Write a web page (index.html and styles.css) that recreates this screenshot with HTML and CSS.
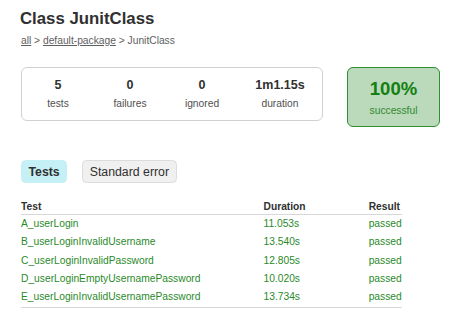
FILE: index.html
```html
<!DOCTYPE html>
<html lang="en">
<head>
    <meta charset="UTF-8">
    <meta name="viewport" content="width=device-width, initial-scale=1.0">
    <title>Test results - Class JunitClass</title>
    <link rel="stylesheet" href="styles.css">
</head>
<body>
    <div id="content">
        <h1>Class JunitClass</h1>
        <div class="breadcrumbs">
            <a href="#">all</a> &gt; <a href="#">default-package</a> &gt; JunitClass
        </div>

        <div id="summary">
            <div class="summaryGroup">
                <div class="infoBox">
                    <div class="counter">5</div>
                    <p>tests</p>
                </div>
                <div class="infoBox">
                    <div class="counter">0</div>
                    <p>failures</p>
                </div>
                <div class="infoBox">
                    <div class="counter">0</div>
                    <p>ignored</p>
                </div>
                <div class="infoBox duration">
                    <div class="counter">1m1.15s</div>
                    <p>duration</p>
                </div>
            </div>
            <div class="infoBox successRate">
                <div class="percent">100%</div>
                <p>successful</p>
            </div>
        </div>

        <ul class="tabLinks">
            <li class="selected"><a href="#tab0">Tests</a></li>
            <li><a href="#tab1">Standard error</a></li>
        </ul>

        <div class="tab">
            <table>
                <thead>
                    <tr>
                        <th>Test</th>
                        <th>Duration</th>
                        <th>Result</th>
                    </tr>
                </thead>
                <tbody>
                    <tr>
                        <td class="success">A_userLogin</td>
                        <td class="success">11.053s</td>
                        <td class="success">passed</td>
                    </tr>
                    <tr>
                        <td class="success">B_userLoginInvalidUsername</td>
                        <td class="success">13.540s</td>
                        <td class="success">passed</td>
                    </tr>
                    <tr>
                        <td class="success">C_userLoginInvalidPassword</td>
                        <td class="success">12.805s</td>
                        <td class="success">passed</td>
                    </tr>
                    <tr>
                        <td class="success">D_userLoginEmptyUsernamePassword</td>
                        <td class="success">10.020s</td>
                        <td class="success">passed</td>
                    </tr>
                    <tr>
                        <td class="success">E_userLoginInvalidUsernamePassword</td>
                        <td class="success">13.734s</td>
                        <td class="success">passed</td>
                    </tr>
                </tbody>
            </table>
        </div>
    </div>
</body>
</html>
```

FILE: styles.css
```css
body {
    margin: 0;
    padding: 0;
    font-family: "Liberation Sans", Arial, sans-serif;
    font-size: 10.25px;
    color: #303030;
    background-color: #fff;
}
a, a:visited {
    color: #303030;
}
#content {
    padding: 9px 20px 20px 21px;
}
#content h1 {
    font-size: 16.8px;
    line-height: 20px;
    margin: 0 0 5.5px -1px;
    white-space: nowrap;
}
.breadcrumbs, .breadcrumbs a {
    color: #606060;
    line-height: 12px;
}
#summary {
    display: flex;
    align-items: flex-start;
    margin-top: 20.5px;
}
.summaryGroup {
    display: flex;
    border: solid 1px #d0d0d0;
    border-radius: 6px;
}
.infoBox {
    width: 72px;
    padding: 10px 0;
    text-align: center;
}
.infoBox.duration {
    width: 84px;
}
.infoBox p {
    margin: 0;
    line-height: 13px;
    color: #505050;
}
.counter {
    font-size: 12.5px;
    font-weight: bold;
    line-height: 15px;
    margin-bottom: 4px;
}
.successRate {
    width: 91px;
    margin-left: 24px;
    padding: 10px 0 9px;
    border: solid 1px #2f8f2f;
    border-radius: 6px;
    background-color: #bbd9bb;
}
.successRate .percent {
    font-size: 18.5px;
    font-weight: bold;
    line-height: 22px;
    margin-bottom: 4px;
    color: #128012;
}
.successRate p {
    color: #2f8a2f;
}
ul.tabLinks {
    display: flex;
    gap: 15px;
    margin: 33px 0 16.7px;
    padding: 0;
    list-style: none;
}
ul.tabLinks li {
    padding: 4px 6.5px 3px;
    border: solid 1px #dcdcdc;
    border-radius: 4.5px;
    background-color: #f0f0f0;
}
ul.tabLinks li.selected {
    background-color: #c5f0f5;
    border-color: #c5f0f5;
}
ul.tabLinks li.selected a {
    font-weight: bold;
}
ul.tabLinks a {
    display: block;
    font-size: 12.3px;
    line-height: 14px;
    text-decoration: none;
    white-space: nowrap;
}
.tab table {
    border-collapse: collapse;
    border-bottom: solid 1px #d8d8d8;
}
.tab th {
    text-align: left;
    white-space: nowrap;
    font-weight: bold;
    line-height: 12px;
    padding: 1px 0 1px 63px;
    border-bottom: solid 1px #d8d8d8;
}
.tab td {
    white-space: nowrap;
    line-height: 12px;
    padding: 3.2px 0 3.2px 63px;
}
.tab th:first-child, .tab td:first-child {
    padding-left: 0;
}
.success {
    color: #2a8a2a;
}
```
